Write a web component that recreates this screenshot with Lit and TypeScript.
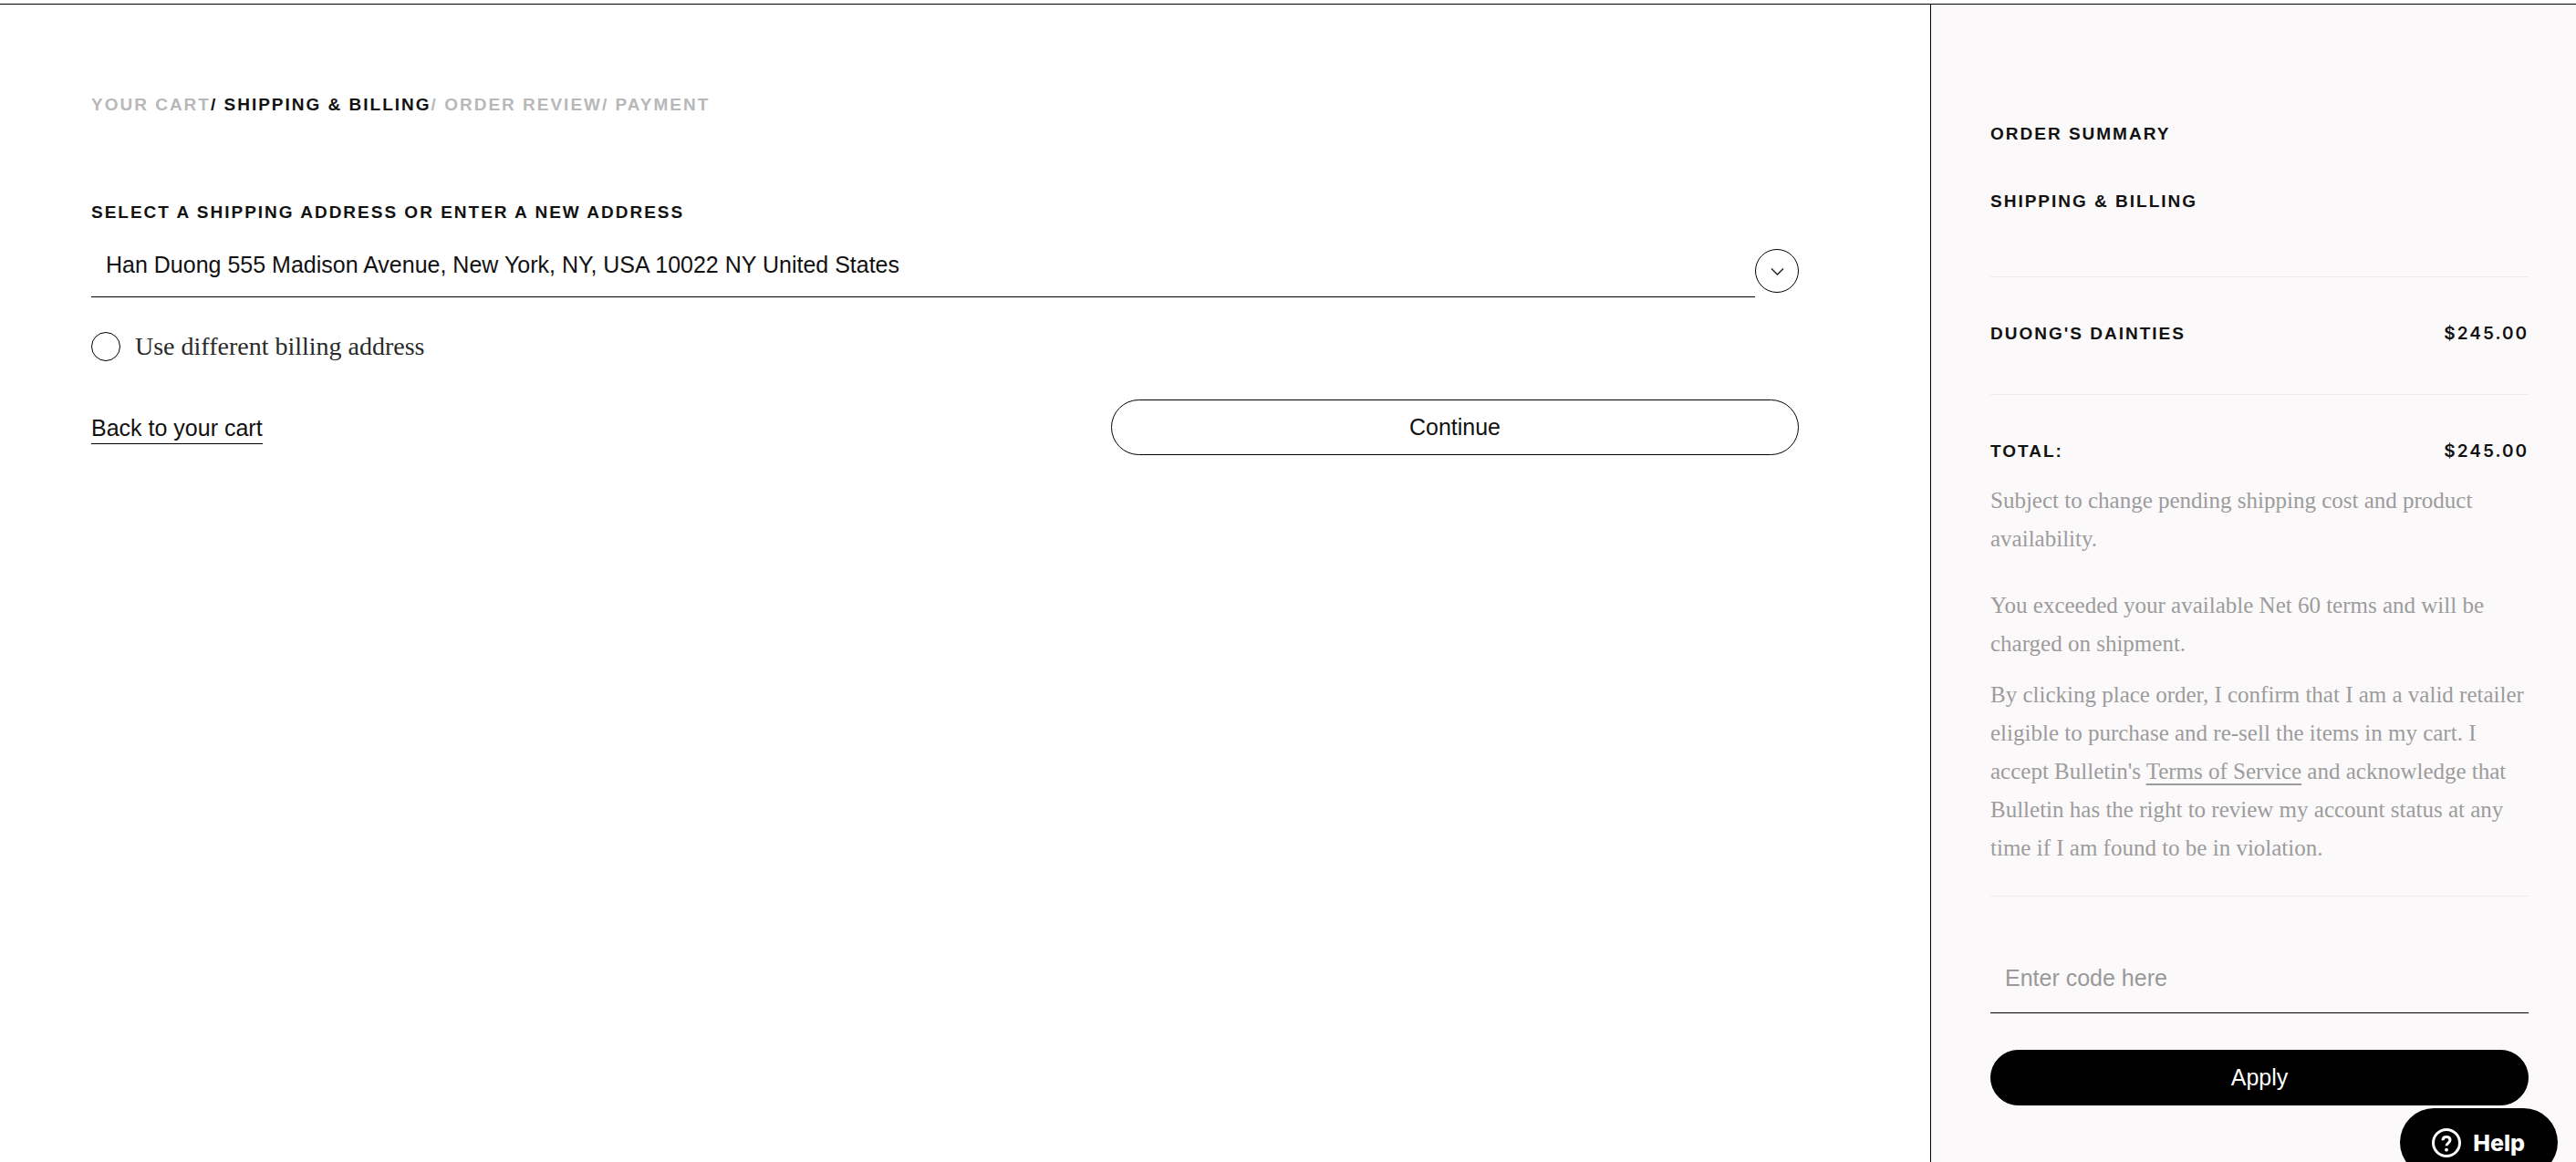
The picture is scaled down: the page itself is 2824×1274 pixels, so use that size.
import { LitElement, html, css } from "lit";
import { customElement, state } from "lit/decorators.js";

interface Step {
  label: string;
  current?: boolean;
}

const STEPS: Step[] = [
  { label: "Your cart" },
  { label: "Shipping & billing", current: true },
  { label: "Order review" },
  { label: "Payment" },
];

const ADDRESS =
  "Han Duong 555 Madison Avenue, New York, NY, USA 10022 NY United States";

const shared = css`
  * {
    box-sizing: border-box;
  }
  h1,
  h2,
  p,
  ol,
  dl,
  dd {
    margin: 0;
    padding: 0;
  }
  .label {
    display: block;
    font: 700 19px/24px "Liberation Sans", sans-serif;
    letter-spacing: 2px;
    text-transform: uppercase;
    color: #111;
  }
  .pill {
    height: 61px;
    padding: 0 24px 2px;
    border: 1px solid #000;
    border-radius: 31px;
    font: 400 25px/34px "Liberation Sans", sans-serif;
    cursor: pointer;
  }
`;

@customElement("checkout-form")
export class CheckoutForm extends LitElement {
  static styles = [
    shared,
    css`
      :host {
        display: block;
        padding: 98px 144px 60px 100px;
        font-family: "Liberation Sans", sans-serif;
        color: #111;
      }
      .steps {
        display: flex;
        list-style: none;
      }
      .step {
        white-space: pre;
        color: #b8b8b8;
      }
      .current {
        color: #111;
      }
      .address-label {
        margin-top: 94px;
      }
      .select-row {
        display: flex;
        align-items: flex-end;
        margin-top: 12px;
      }
      .select {
        flex: 1;
        min-width: 0;
        height: 69px;
        padding: 0 16px 2px;
        border: 0;
        border-bottom: 1px solid #000;
        border-radius: 0;
        appearance: none;
        background: transparent;
        font: 400 25px/34px "Liberation Sans", sans-serif;
        color: #111;
      }
      .chevron {
        width: 48px;
        height: 48px;
        margin-bottom: 5px;
        fill: none;
      }
      .billing {
        display: flex;
        align-items: center;
        gap: 16px;
        margin-top: 38px;
        font: 400 28px/32px "Liberation Serif", serif;
        color: #2a2a2a;
      }
      .check {
        appearance: none;
        width: 32px;
        height: 32px;
        margin: 0;
        border: 1px solid #000;
        border-radius: 50%;
      }
      .check:checked {
        background: radial-gradient(#000 0 9px, transparent 10px);
      }
      .actions {
        display: flex;
        align-items: center;
        justify-content: space-between;
        margin-top: 42px;
      }
      .back {
        padding-top: 2px;
        border-bottom: 1px solid #000;
        font-size: 25px;
        line-height: 34px;
        color: inherit;
        text-decoration: none;
      }
      .continue {
        width: calc(100% * 5 / 12 - 26px);
        background: transparent;
        color: #111;
      }
    `,
  ];

  @state() private differentBilling = false;

  render() {
    return html`
      <nav aria-label="Checkout steps">
        <ol class="steps">
          ${STEPS.map(
            (step, i) =>
              html`<li
                class="label step ${step.current ? "current" : ""}"
                aria-current=${step.current ? "step" : "false"}
              >${i > 0 ? "/ " : ""}${step.label}</li>`,
          )}
        </ol>
      </nav>
      <label class="label address-label" for="address"
        >Select a shipping address or enter a new address</label
      >
      <div class="select-row">
        <select class="select" id="address">
          <option>${ADDRESS}</option>
        </select>
        <svg class="chevron" viewBox="0 0 48 48" aria-hidden="true">
          <circle cx="24" cy="24" r="23.5" stroke="#000" />
          <path d="M18 21.5 24.5 28 31 21.5" stroke="#222" stroke-width="1.5" />
        </svg>
      </div>
      <label class="billing">
        <input
          class="check"
          type="checkbox"
          .checked=${this.differentBilling}
          @change=${(e: Event) =>
            (this.differentBilling = (e.target as HTMLInputElement).checked)}
        />
        Use different billing address
      </label>
      <div class="actions">
        <a class="back" href="#cart">Back to your cart</a>
        <button class="pill continue" type="button">Continue</button>
      </div>
    `;
  }
}

@customElement("order-summary")
export class OrderSummary extends LitElement {
  static styles = [
    shared,
    css`
      :host {
        display: block;
        box-sizing: border-box;
        padding: 130px 52px 60px 65px;
        border-left: 1px solid #000;
        background: #fbf9fa;
      }
      .section {
        margin-top: 50px;
      }
      .line {
        display: flex;
        justify-content: space-between;
        padding: 50px 0 54px;
        border-top: 1px solid #eeedee;
      }
      .first {
        margin-top: 70px;
      }
      .total {
        padding-bottom: 21px;
      }
      .amount {
        font-family: Inter, "Liberation Sans", sans-serif;
        font-weight: 600;
      }
      .note {
        font: 400 25px/42px "Liberation Serif", serif;
        color: #9c9c9c;
      }
      .terms {
        margin-top: 31px;
      }
      .legal {
        margin-top: 14px;
      }
      .link {
        color: inherit;
        text-decoration: underline 2px;
        text-underline-offset: 5px;
        text-decoration-skip-ink: none;
      }
      .promo {
        display: flex;
        flex-direction: column;
        gap: 40px;
        margin-top: 31px;
        padding-top: 54px;
        border-top: 1px solid #eeedee;
      }
      .code {
        width: 100%;
        height: 74px;
        padding: 0 16px 2px;
        border: 0;
        border-bottom: 1px solid #000;
        border-radius: 0;
        background: transparent;
        font: 400 25px/34px "Liberation Sans", sans-serif;
        color: #111;
      }
      .code::placeholder {
        color: #999;
        opacity: 1;
      }
      .apply {
        background: #000;
        color: #fff;
      }
    `,
  ];

  render() {
    return html`
      <h1 class="label">Order summary</h1>
      <h2 class="label section">Shipping &amp; billing</h2>
      <dl>
        <div class="line first">
          <dt class="label">Duong's Dainties</dt>
          <dd class="label amount">$245.00</dd>
        </div>
        <div class="line total">
          <dt class="label">Total:</dt>
          <dd class="label amount">$245.00</dd>
        </div>
      </dl>
      <p class="note">
        Subject to change pending shipping cost and product availability.
      </p>
      <p class="note terms">
        You exceeded your available Net 60 terms and will be charged on shipment.
      </p>
      <p class="note legal">
        By clicking place order, I confirm that I am a valid retailer eligible to
        purchase and re-sell the items in my cart. I accept Bulletin's
        <a class="link" href="#terms">Terms of Service</a> and acknowledge that
        Bulletin has the right to review my account status at any time if I am
        found to be in violation.
      </p>
      <form class="promo" @submit=${(e: Event) => e.preventDefault()}>
        <input
          class="code"
          type="text"
          aria-label="Enter code here"
          placeholder="Enter code here"
        />
        <button class="pill apply" type="submit">Apply</button>
      </form>
    `;
  }
}

@customElement("app-root")
export class AppRoot extends LitElement {
  static styles = css`
    :host {
      display: block;
      box-sizing: border-box;
      min-height: 100vh;
      padding-top: 4px;
      background: #fff;
    }
    .page {
      display: grid;
      grid-template-columns: minmax(0, 1fr) 708px;
      min-height: calc(100vh - 4px);
      box-sizing: border-box;
      border-top: 1px solid #000;
    }
    .help {
      position: fixed;
      right: 20px;
      bottom: -16px;
      display: flex;
      align-items: center;
      gap: 13px;
      height: 75px;
      padding: 0 36px 0 35px;
      border: 0;
      border-radius: 38px;
      background: #000;
      font: 800 25px/32px Inter, "Liberation Sans", sans-serif;
      color: #fff;
      cursor: pointer;
    }
    .help-icon {
      width: 32px;
      height: 32px;
      fill: none;
      stroke: #fff;
      stroke-width: 3;
    }
  `;

  render() {
    return html`
      <div class="page">
        <checkout-form></checkout-form>
        <order-summary></order-summary>
      </div>
      <button class="help" type="button">
        <svg class="help-icon" viewBox="0 0 32 32" aria-hidden="true">
          <circle cx="16" cy="16" r="14.5" />
          <path d="M12 13.2c0-2.4 1.6-3.8 4-3.8s4 1.5 4 3.6c0 3-4 3.200-4 6.300" />
          <circle cx="16" cy="23.700" r="1.900" fill="#fff" stroke="none" />
        </svg>
        Help
      </button>
    `;
  }
}
